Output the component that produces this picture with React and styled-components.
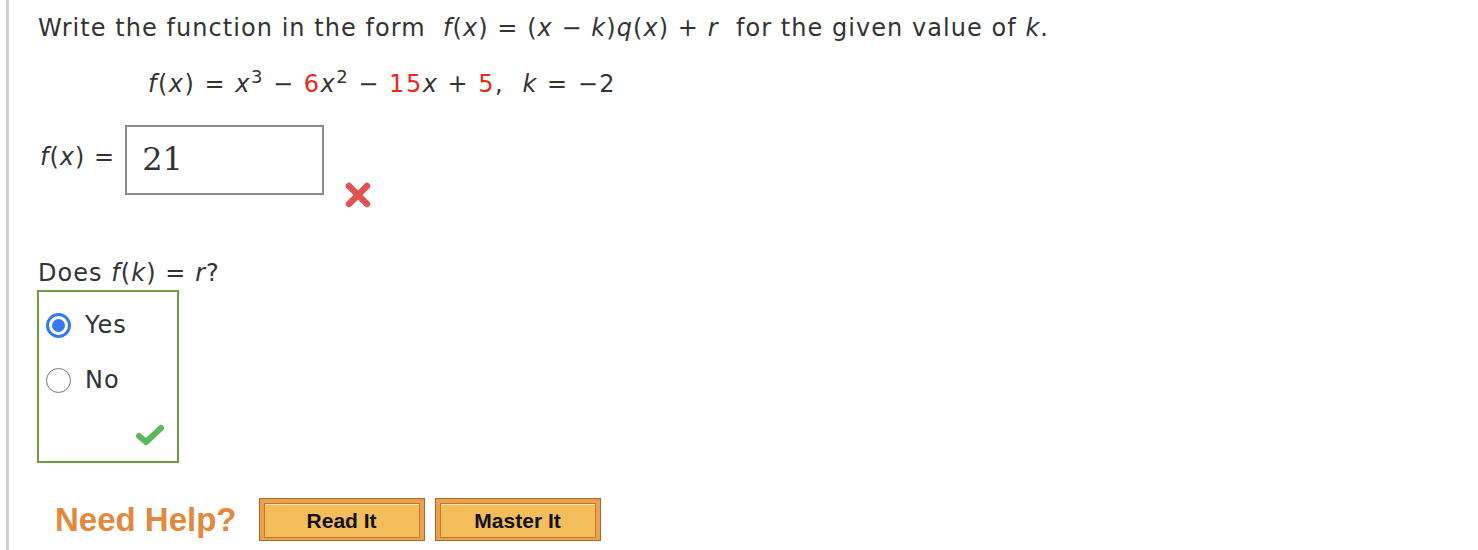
import React from "react";
import styled, { createGlobalStyle } from "styled-components";

const Global = createGlobalStyle`
  body {
    margin: 0;
    background: #fff;
    font-family: "DejaVu Sans", Verdana, sans-serif;
    color: #333;
  }
`;

const Page = styled.div`
  margin-left: 6px;
  border-left: 3px solid #cfcfcf;
  padding: 10px 0 0 29px;
  height: 540px;
`;

const Line = styled.div`
  font-size: 24px;
  line-height: 36px;
  letter-spacing: ${(p) => p.spacing || 1.05}px;
  white-space: pre;
  margin-left: ${(p) => p.indent || 0}px;
  margin-top: ${(p) => p.top || 0}px;
`;

const V = styled.i`
  font-style: italic;
`;

const Red = styled.span`
  color: #e8291c;
`;

const Sup = styled.sup`
  font-size: 18px;
  line-height: 0;
  vertical-align: 9px;
`;

const AnswerRow = styled.div`
  display: flex;
  align-items: flex-start;
  margin-top: 23px;
  margin-left: 2px;
`;

const Label = styled.span`
  font-size: 24px;
  letter-spacing: 1px;
  margin-top: 18px;
  margin-right: 10px;
  white-space: pre;
`;

const Input = styled.div`
  width: 199px;
  height: 70px;
  box-sizing: border-box;
  border: 2px solid #8a8a8a;
  font-family: "DejaVu Serif", "Liberation Serif", serif;
  font-size: 32px;
  color: #333;
  padding: 13px 0 0 15px;
`;

const Mark = styled.svg`
  margin-left: 20px;
  margin-top: 56px;
`;

const Question = styled(Line)`
  margin-top: 46px;
`;

const Choices = styled.div`
  width: 138px;
  border: 2px solid #6b9c3f;
  margin-top: -1px;
  margin-left: -1px;
  position: relative;
  padding-top: 15px;
  box-sizing: content-box;
  height: 154px;
`;

const Choice = styled.label`
  display: flex;
  align-items: center;
  gap: 14px;
  padding-left: 7px;
  height: 36px;
  margin-bottom: 19px;
  font-size: 24px;
  letter-spacing: 1px;
  color: #333;
`;

const Radio = styled.span`
  width: 25px;
  height: 25px;
  border-radius: 50%;
  box-sizing: border-box;
  border: ${(p) => (p.checked ? "3px solid #3478f6" : "1.5px solid #767676")};
  background: #fff;
  display: flex;
  align-items: center;
  justify-content: center;
  &::after {
    content: "";
    width: 13px;
    height: 13px;
    border-radius: 50%;
    background: ${(p) => (p.checked ? "#3478f6" : "transparent")};
  }
`;

const Check = styled.svg`
  position: absolute;
  right: 12px;
  bottom: 14px;
`;

const HelpRow = styled.div`
  display: flex;
  align-items: center;
  margin-top: 35px;
  margin-left: 17px;
  gap: 10px;
`;

const Help = styled.span`
  font-family: "Liberation Sans", Arial, sans-serif;
  font-weight: bold;
  font-size: 33px;
  color: #e3883c;
  margin-right: 12px;
`;

const Button = styled.button`
  width: ${(p) => p.w}px;
  height: 43px;
  padding: 4px;
  border: 1px solid #a86a30;
  background: #eea04a;
  box-sizing: border-box;
  cursor: pointer;
  span {
    display: flex;
    align-items: center;
    justify-content: center;
    height: 100%;
    border: 1px solid #b77a38;
    box-shadow: inset 0 1px 0 #fbe3b0;
    background: #f3bd5c;
    font-family: "Liberation Sans", Arial, sans-serif;
    font-weight: bold;
    font-size: 21px;
    color: #111;
  }
`;

export default function App() {
  return (
    <>
      <Global />
      <Page>
        <Line>
          Write the function in the form  <V>f</V>(<V>x</V>) = (<V>x</V> − <V>k</V>)<V>q</V>(<V>x</V>) + <V>r</V>  for the given value of <V>k</V>.
        </Line>
        <Line indent={110} top={20} spacing={1.5}>
          <V>f</V>(<V>x</V>) = <V>x</V>
          <Sup>3</Sup> − <Red>6</Red>
          <V>x</V>
          <Sup>2</Sup> − <Red>15</Red>
          <V>x</V> + <Red>5</Red>,  <V>k</V> = −2
        </Line>
        <AnswerRow>
          <Label>
            <V>f</V>(<V>x</V>) =
          </Label>
          <Input>21</Input>
          <Mark width="28" height="28" viewBox="0 0 28 28">
            <path
              d="M5 5 L23 23 M23 5 L5 23"
              stroke="#e25252"
              strokeWidth="6.5"
              strokeLinecap="round"
            />
          </Mark>
        </AnswerRow>
        <Question>
          Does <V>f</V>(<V>k</V>) = <V>r</V>?
        </Question>
        <Choices>
          <Choice>
            <Radio checked />
            Yes
          </Choice>
          <Choice>
            <Radio />
            No
          </Choice>
          <Check width="30" height="24" viewBox="0 0 30 24">
            <path
              d="M4 13 L11 19 L26 5"
              fill="none"
              stroke="#5cb85a"
              strokeWidth="6"
              strokeLinecap="round"
              strokeLinejoin="round"
            />
          </Check>
        </Choices>
        <HelpRow>
          <Help>Need Help?</Help>
          <Button w={166}>
            <span>Read It</span>
          </Button>
          <Button w={166}>
            <span>Master It</span>
          </Button>
        </HelpRow>
      </Page>
    </>
  );
}
